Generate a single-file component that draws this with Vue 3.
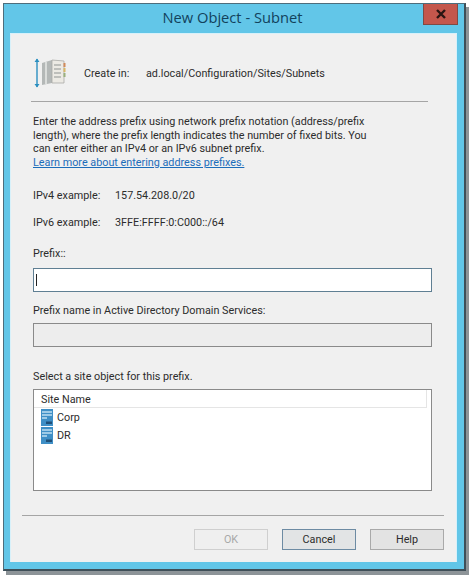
<script setup>
const paragraph = [
  'Enter the address prefix using network prefix notation (address/prefix',
  'length), where the prefix length indicates the number of fixed bits. You',
  'can enter either an IPv4 or an IPv6 subnet prefix.',
]
const sites = ['Corp', 'DR']
</script>

<template>
  <div class="page">
    <div class="window">
      <div class="titlebar">
        <span class="title">New Object - Subnet</span>
        <div class="close"><svg width="12" height="10" viewBox="0 0 12 10"><path d="M2 1l8 8M10 1l-8 8" stroke="#2a1512" stroke-width="2.4" fill="none"/></svg></div>
      </div>
      <div class="content">
        <div class="head">
          <svg class="headicon" width="34" height="34" viewBox="0 0 34 34">
            <path d="M4 3v28" stroke="#2b8fc0" stroke-width="1.4"/>
            <path d="M1.500 6L4 2.500 6.500 6zM1.500 28L4 31.500 6.500 28z" fill="#2b8fc0"/>
            <path d="M9 7l10-3v23l-10 2z" fill="#b4b8b7"/>
            <path d="M19 4l12 1v22l-12 0z" fill="#eceae4" stroke="#a9aaa6" stroke-width=".8"/>
            <path d="M13 6v22" stroke="#dfe1df" stroke-width="1.800"/>
            <path d="M21 9h7M21 13h7M21 17h7M21 21h7" stroke="#8f9392" stroke-width="1.200"/>
            <path d="M31.500 7v4" stroke="#d28b5a" stroke-width="2"/>
            <path d="M31.500 12v4" stroke="#d9b765" stroke-width="2"/>
            <path d="M31.500 17v4" stroke="#9ab07c" stroke-width="2"/>
          </svg>
          <span class="createlabel">Create in:</span>
          <span class="createpath">ad.local/Configuration/Sites/Subnets</span>
        </div>
        <div class="rule top"></div>
        <div class="para">
          <div v-for="line in paragraph" :key="line">{{ line }}</div>
          <div class="link">Learn more about entering address prefixes.</div>
        </div>
        <div class="example first"><span class="exlabel">IPv4 example:</span><span>157.54.208.0/20</span></div>
        <div class="example second"><span class="exlabel">IPv6 example:</span><span>3FFE:FFFF:0:C000::/64</span></div>
        <div class="label prefix">Prefix::</div>
        <div class="input active"><span class="caret"></span></div>
        <div class="label name">Prefix name in Active Directory Domain Services:</div>
        <div class="input disabled"></div>
        <div class="label select">Select a site object for this prefix.</div>
        <div class="list">
          <div class="listhead">Site Name</div>
          <div v-for="site in sites" :key="site" class="row">
            <svg width="12" height="17" viewBox="0 0 12 17">
              <rect width="12" height="17" fill="#3f8fc6"/>
              <path d="M1 3h10M1 6h10M1 9h5" stroke="#bfe0f2" stroke-width="1.500"/>
              <rect x="5" y="12.500" width="6" height="2.500" fill="#1f4f78"/>
            </svg>
            <span>{{ site }}</span>
          </div>
        </div>
        <div class="rule bottom"></div>
        <div class="buttons">
          <div class="btn ok">OK</div>
          <div class="btn cancel">Cancel</div>
          <div class="btn help">Help</div>
        </div>
      </div>
    </div>
  </div>
</template>

<style>
html, body { margin: 0; background: #fff; }
</style>

<style scoped>
.page {
  width: 469px;
  height: 576px;
  padding: 3px 3px 5px 3px;
  box-sizing: border-box;
  font-family: Roboto, "Open Sans", "Liberation Sans", sans-serif;
  font-size: 10.8px;
  color: #2c2c2c;
  overflow: hidden;
}
.window {
  height: 100%;
  box-sizing: border-box;
  border: 1px solid #4d6d7c;
  border-right: 2px solid #3f4f58;
  border-bottom: 2px solid #3f4f58;
  background: #62c6e8;
  display: flex;
  flex-direction: column;
  padding: 0 7px 7px 6px;
  box-shadow: 3px 4px 0 #8d9498;
}
.titlebar {
  height: 29px;
  flex: none;
  position: relative;
  display: flex;
  align-items: center;
  justify-content: center;
}
.title {
  font-family: "Open Sans", sans-serif;
  font-size: 14.7px;
  color: #12425c;
  transform: translate(-1px, -2px);
}
.close {
  position: absolute;
  right: -1px;
  top: 0;
  width: 35px;
  height: 21px;
  background: #c4574c;
  border: 1px solid #7f4a44;
  border-top: none;
  box-sizing: border-box;
  display: flex;
  align-items: center;
  justify-content: center;
}
.content {
  flex: 1;
  background: #f0f0f0;
  border: 1px solid #d8f1fa;
  border-width: 1px 1px 0 1px;
  display: flex;
  flex-direction: column;
  padding: 0 12px 0 22px;
  min-height: 0;
}
.head {
  display: flex;
  align-items: center;
  height: 34px;
  margin-top: 22px;
}
.createlabel { margin-left: 17px; width: 62px; }
.rule { height: 1px; background: #a5a5a5; flex: none; }
.rule.top { margin: 11px 16px 0 -2px; }
.para {
  margin-top: 13px;
  line-height: 13.5px;
}
.link { color: #1c6dba; text-decoration: underline; }
.example { display: flex; line-height: 14px; }
.exlabel { width: 82px; }
.example.first { margin-top: 20px; }
.example.second { margin-top: 13px; }
.label { line-height: 14px; }
.prefix { margin-top: 17px; }
.name { margin-top: 12px; }
.select { margin-top: 23px; }
.input {
  height: 24px;
  box-sizing: border-box;
  margin-top: 7px;
  margin-right: 12px;
  flex: none;
  display: flex;
  align-items: center;
}
.active { background: #fff; border: 1px solid #5f7f93; padding-left: 2px; }
.caret { width: 1px; height: 12px; background: #222; }
.disabled { background: #ededed; border: 1px solid #8a8a8a; margin-top: 5px; }
.list {
  margin-top: 5px;
  margin-right: 12px;
  height: 102px;
  flex: none;
  box-sizing: border-box;
  background: #fff;
  border: 1px solid #8a8a8a;
}
.listhead {
  height: 17px;
  line-height: 19px;
  padding-left: 7px;
  border-bottom: 1px solid #e5e5e5;
  border-right: 1px solid #e5e5e5;
  margin-right: 4px;
}
.row {
  height: 18px;
  display: flex;
  align-items: center;
  padding-left: 7px;
  gap: 4px;
}
.rule.bottom { margin: 24px 0 0 -11px; }
.buttons {
  display: flex;
  justify-content: flex-end;
  gap: 14px;
  margin-top: 13px;
}
.btn {
  width: 74px;
  height: 21px;
  box-sizing: border-box;
  display: flex;
  align-items: center;
  justify-content: center;
  border: 1px solid #a9a9a9;
  background: #e3e3e3;
}
.ok { color: #a8a8a8; border-color: #cfcfcf; background: #efefef; }
.cancel { border-color: #6d8ba3; background: #e2e4e5; }
</style>
